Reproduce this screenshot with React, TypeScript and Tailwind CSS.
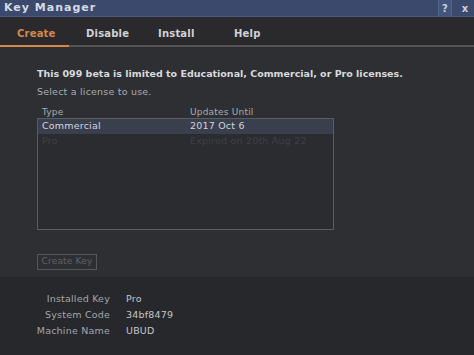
const LICENSES = [
  { type: "Commercial", until: "2017 Oct 6", selected: true, expired: false },
  { type: "Pro", until: "Expired on 20th Aug 22", selected: false, expired: true },
];

const INFO = [
  ["Installed Key", "Pro"],
  ["System Code", "34bf8479"],
  ["Machine Name", "UBUD"],
];

const TABS = [
  { label: "Create", w: "w-[69px]" },
  { label: "Disable", w: "w-[72px]" },
  { label: "Install", w: "w-[76px]" },
  { label: "Help", w: "w-[60px]" },
];

export default function App() {
  return (
    <div
      className="w-[474px] h-[355px] flex flex-col bg-[#2e2f33] text-[9.5px] tracking-[0.2px] text-[#c8c9cc] overflow-hidden"
      style={{ fontFamily: "'DejaVu Sans', sans-serif" }}
    >
      {/* title bar */}
      <div className="h-[17px] flex items-stretch bg-[#3b4a6c] border-b border-[#4a5a80]">
        <div className="flex-1 pl-[4px] flex items-center font-bold text-[11px] tracking-[1px] text-[#d6dae3]">
          Key Manager
        </div>
        <div className="w-[14px] mr-[4px] flex items-center justify-center bg-[#44557a] border-x border-[#52648a] font-bold text-[10px] text-[#c9d0de]">?</div>
        <div className="w-[18px] flex items-center justify-center font-bold text-[10px] text-[#c9d0de]">x</div>
      </div>

      {/* tabs */}
      <div className="h-[30px] flex bg-[#2a2a2c] border-b-2 border-[#545454]">
        {TABS.map((t, i) => (
          <div
            key={t.label}
            className={
              "flex items-center pl-[17px] pt-[5px] font-bold text-[10px] relative " +
              t.w + (i === 0 ? " text-[#d4874a]" : " text-[#d0d2d6]")
            }
          >
            {t.label}
            {i === 0 && <div className="absolute left-0 right-0 -bottom-[2px] h-[2px] bg-[#d4874a]" />}
          </div>
        ))}
      </div>

      {/* main */}
      <div className="flex-1 flex flex-col pl-[37px] pt-[20px]">
        <div className="font-bold tracking-normal text-[#d9dadd] leading-[14px]">
          This 099 beta is limited to Educational, Commercial, or Pro licenses.
        </div>
        <div className="mt-[4px] leading-[14px] text-[#a9abb0]">Select a license to use.</div>

        <div className="mt-[7px] flex text-[9px] text-[#a9abb0] leading-[12px] pl-[5px]">
          <div className="w-[148px]">Type</div>
          <div>Updates Until</div>
        </div>
        <div className="w-[297px] h-[112px] border border-[#5a5c62] bg-[#2b2c30]">
          {LICENSES.map(l => (
            <div
              key={l.type}
              className={
                "h-[15px] flex items-center pl-[4px] " +
                (l.selected ? "bg-[#3a3f4e] text-[#d3d5da]" : "text-[#3e4047]")
              }
            >
              <div className="w-[148px]">{l.type}</div>
              <div>{l.until}</div>
            </div>
          ))}
        </div>

        <div className="mt-[24px] w-[60px] h-[16px] border border-[#55575d] flex items-center justify-center text-[9px] text-[#5e6067]">
          Create Key
        </div>
      </div>

      {/* footer */}
      <div className="h-[78px] bg-[#27282b] pt-[15px] flex flex-col gap-[2px]">
        {INFO.map(([k, v]) => (
          <div key={k} className="flex leading-[14px]">
            <div className="w-[110px] text-right text-[#a4a6ab]">{k}</div>
            <div className="pl-[16px] text-[#c4c6cb]">{v}</div>
          </div>
        ))}
      </div>
    </div>
  );
}
